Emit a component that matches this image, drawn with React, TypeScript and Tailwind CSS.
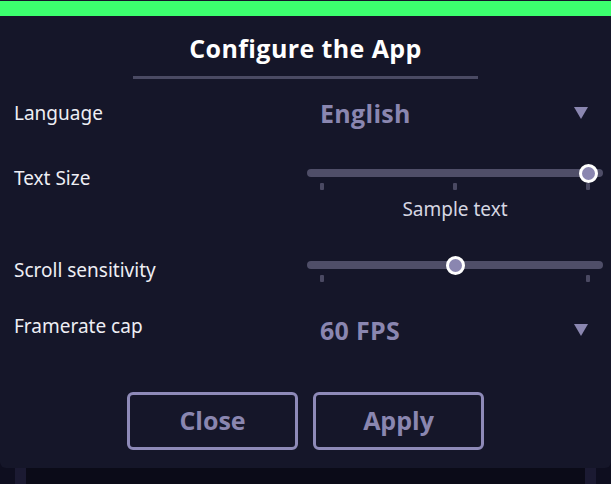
import React from 'react';

const heading = { fontFamily: '"Open Sans", "Noto Sans", sans-serif' };
const body = { fontFamily: '"Noto Sans", "Open Sans", sans-serif' };

function Caret() {
  return (
    <svg width="14" height="12" viewBox="0 0 14 12" className="shrink-0">
      <polygon points="0,0 14,0 7,12" fill="#8a86b0" />
    </svg>
  );
}

function Dropdown({ value }: { value: string }) {
  return (
    <div className="flex items-center justify-between pl-[13px] pr-[15px] h-[30px]">
      <span className="text-[25px] font-bold tracking-[0.3px] text-[#8a86b0] leading-[30px]" style={heading}>
        {value}
      </span>
      <Caret />
    </div>
  );
}

// ticks are given as positions 0..1 along the usable range
function Slider({ value, ticks }: { value: number; ticks: number[] }) {
  return (
    <div className="relative">
      <div className="h-[20px] flex items-center">
        <div className="h-[8px] w-full rounded-full bg-[#4f4e68]" />
      </div>
      <div className="relative h-[7px] mx-[15px]">
        {ticks.map((t) => (
          <div
            key={t}
            className="absolute top-0 w-[4px] h-[7px] rounded-[1px] bg-[#4a4962]"
            style={{ left: `calc(${t * 100}% - 2px)` }}
          />
        ))}
      </div>
      <div className="absolute top-0 left-[15px] right-[15px] h-[20px] pointer-events-none">
        <div
          className="absolute top-[0.5px] w-[19px] h-[19px] rounded-full border-[3px] border-white bg-[#8a86b0]"
          style={{ left: `calc(${value * 100}% - 9.5px)` }}
        />
      </div>
    </div>
  );
}

function Label({ children }: { children: React.ReactNode }) {
  return (
    <div className="w-[307px] pl-[14px] text-[19px] leading-[24px] text-[#eeeef4]" style={body}>
      {children}
    </div>
  );
}

export default function App() {
  return (
    <div className="w-[611px] h-[484px] bg-[#0e0e1f] flex flex-col overflow-hidden">
      <div className="h-[468px] shrink-0 bg-[#151629] rounded-b-md flex flex-col">
        <div className="h-[16px] border-t border-[#151629] bg-[#3cff6e]" />

        <h1
          className="mt-[18px] text-center text-[25px] font-bold tracking-[0.4px] leading-[28px] text-white"
          style={heading}
        >
          Configure the App
        </h1>
        <div className="mt-[14px] mx-auto w-[345px] h-[3px] bg-[#4a4a63]" />

        {/* Language */}
        <div className="mt-[19px] flex items-center">
          <Label>Language</Label>
          <div className="flex-1 mr-[8px]">
            <Dropdown value="English" />
          </div>
        </div>

        {/* Text size */}
        <div className="mt-[35px] flex items-start">
          <div className="pt-[3px]">
            <Label>Text Size</Label>
          </div>
          <div className="flex-1 mr-[8px]">
            <Slider value={1} ticks={[0, 0.5, 1]} />
            <div className="mt-[7px] text-center text-[19px] leading-[24px] text-[#d6d6e2]" style={body}>
              Sample text
            </div>
          </div>
        </div>

        {/* Scroll sensitivity */}
        <div className="mt-[34px] flex items-start">
          <div className="pt-[3px]">
            <Label>Scroll sensitivity</Label>
          </div>
          <div className="flex-1 mr-[8px]">
            <Slider value={0.5} ticks={[0, 1]} />
          </div>
        </div>

        {/* Framerate */}
        <div className="mt-[32px] flex items-start">
          <Label>Framerate cap</Label>
          <div className="flex-1 mr-[8px] pt-[1px]">
            <Dropdown value="60 FPS" />
          </div>
        </div>

        <div className="mt-[47px] flex justify-center gap-[15px]">
          <button
            className="w-[171px] h-[58px] rounded-md border-[3px] border-[#8e8ab8] text-[25px] font-bold text-[#8a86b0]"
            style={heading}
          >
            Close
          </button>
          <button
            className="w-[171px] h-[58px] rounded-md border-[3px] border-[#8e8ab8] text-[25px] font-bold text-[#8a86b0]"
            style={heading}
          >
            Apply
          </button>
        </div>
      </div>

      <div className="flex-1 mx-[15px] border-x-[11px] border-[#1b1a32] bg-[#0b0b18]" />
    </div>
  );
}
